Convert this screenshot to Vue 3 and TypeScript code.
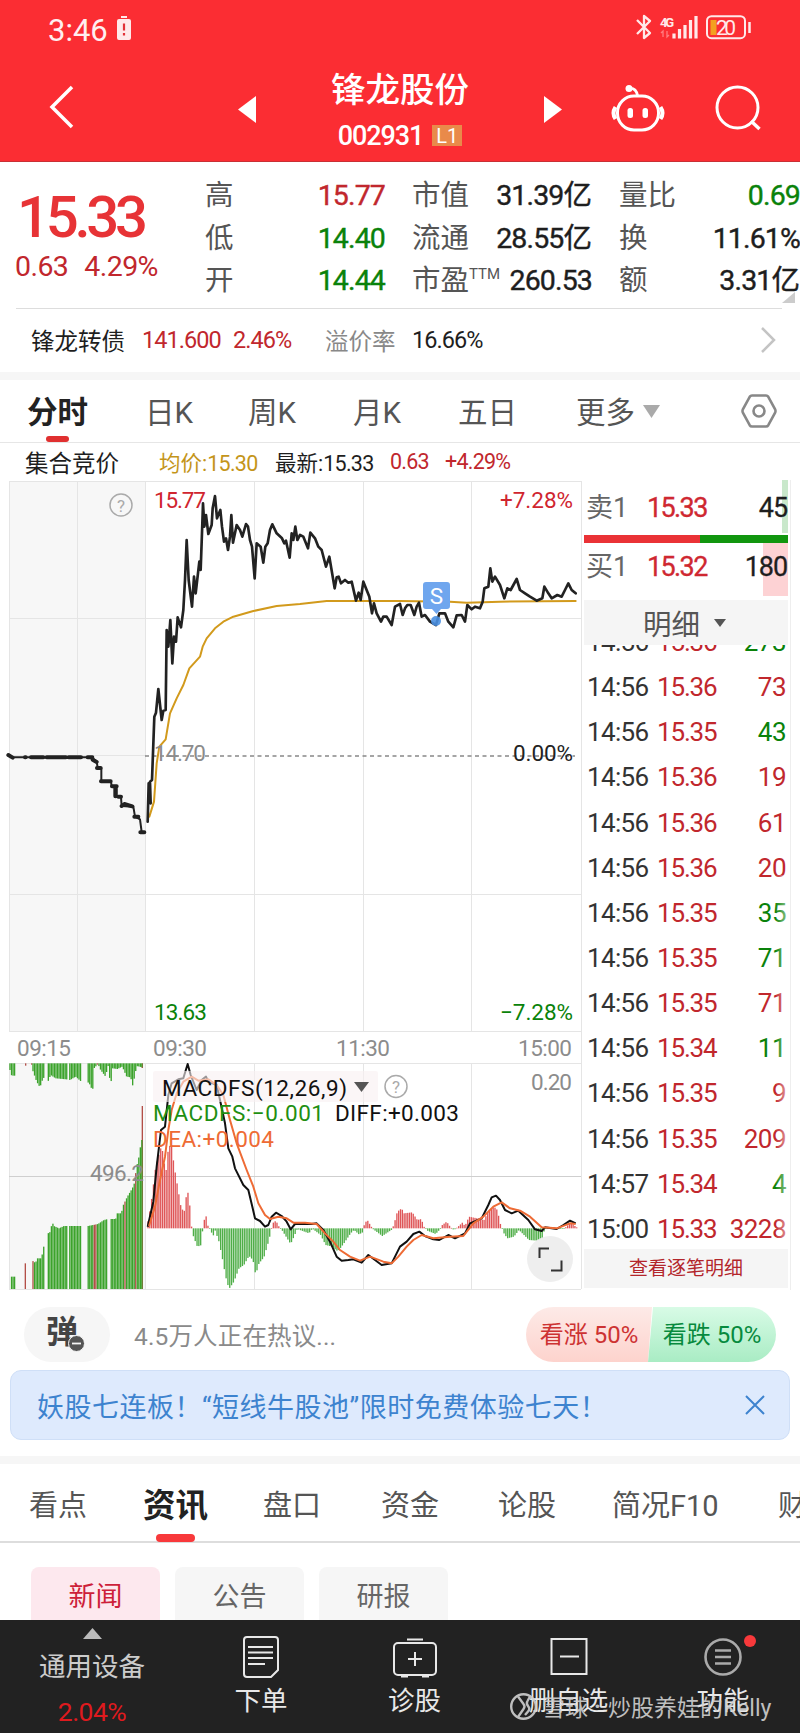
<script setup lang="ts">
type Point = [number, number]
interface Bar { x: number; y: number; h: number; up: boolean }
interface Label { t: string; x: number; y: number; w: number; c: string }

const stats = [
  ['高', '15.77', 'up', '市值', '', '31.39', '亿', '量比', '0.69', '', 'down'],
  ['低', '14.40', 'down', '流通', '', '28.55', '亿', '换', '11.61%', '', ''],
  ['开', '14.44', 'down', '市盈', 'TTM', '260.53', '', '额', '3.31', '亿', ''],
]

const trades: [string, string, string, string][] = [
  ['14:56', '15.36', '273', 'down'], ['14:56', '15.36', '73', 'up'], ['14:56', '15.35', '43', 'down'],
  ['14:56', '15.36', '19', 'up'], ['14:56', '15.36', '61', 'up'], ['14:56', '15.36', '20', 'up'],
  ['14:56', '15.35', '35', 'down'], ['14:56', '15.35', '71', 'down'], ['14:56', '15.35', '71', 'up'],
  ['14:56', '15.34', '11', 'down'], ['14:56', '15.35', '9', 'up'], ['14:56', '15.35', '209', 'up'],
  ['14:57', '15.34', '4', 'down'], ['15:00', '15.33', '3228', 'up'],
]

const RED = '#d0252f'
const GREEN = '#0a820a'
const GREY = '#8c8c8c'
const labels: Label[] = [
  { t: '15.77', x: 154, y: 508, w: 52, c: RED },
  { t: '+7.28%', x: 500, y: 508, w: 73, c: RED },
  { t: '14.70', x: 154, y: 761, w: 52, c: GREY },
  { t: '0.00%', x: 513, y: 761, w: 60, c: '#222' },
  { t: '13.63', x: 154, y: 1020, w: 53, c: GREEN },
  { t: '−7.28%', x: 500, y: 1020, w: 73, c: GREEN },
  { t: '09:15', x: 17, y: 1056, w: 54, c: GREY },
  { t: '09:30', x: 153, y: 1056, w: 54, c: GREY },
  { t: '11:30', x: 336, y: 1056, w: 54, c: GREY },
  { t: '15:00', x: 518, y: 1056, w: 54, c: GREY },
  { t: '0.20', x: 531, y: 1090, w: 41, c: GREY },
  { t: '496.2', x: 90, y: 1181, w: 54, c: GREY },
  { t: 'MACDFS(12,26,9)', x: 162, y: 1096, w: 185, c: '#111' },
  { t: 'MACDFS:−0.001', x: 153, y: 1121, w: 171, c: '#1f8f12' },
  { t: 'DIFF:+0.003', x: 335, y: 1121, w: 124, c: '#111' },
  { t: 'DEA:+0.004', x: 153, y: 1147, w: 121, c: '#ee6b35' },
]

const price = '443,1325 446,1210 452,1270 450,1205 456,1200 463,1010 468,998 475,927 485,1020 490,992 497,990 500,750 505,800 511,720 517,850 522,770 528,785 533,712 543,742 550,690 555,600 560,480 566,600 576,680 582,590 587,640 598,545 602,570 607,430 609,370 613,440 618,405 625,462 635,435 638,385 645,348 651,415 661,390 666,440 672,485 678,475 684,510 690,470 694,405 699,488 710,435 720,450 727,470 738,432 744,440 750,480 756,500 764,595 770,490 782,500 790,548 796,500 803,490 810,450 817,433 830,460 846,475 853,490 858,482 869,533 875,460 880,480 886,440 892,480 900,465 910,470 924,505 931,458 945,475 955,500 965,510 978,560 988,530 1004,625 1010,592 1016,590 1023,610 1035,600 1045,608 1055,605 1068,662 1076,638 1082,660 1090,605 1108,650 1116,700 1122,670 1130,700 1143,725 1150,710 1160,710 1175,735 1185,680 1200,672 1208,705 1215,685 1222,675 1232,675 1243,705 1250,680 1257,668 1265,710 1275,705 1290,725 1308,735 1318,700 1335,700 1345,725 1360,742 1370,706 1385,705 1395,725 1402,675 1415,688 1425,680 1440,685 1448,665 1453,625 1465,620 1471,565 1477,605 1485,590 1500,615 1513,655 1522,625 1532,630 1550,597 1560,630 1575,640 1590,650 1610,662 1627,655 1633,620 1645,640 1655,655 1672,645 1685,650 1695,630 1705,610 1715,630 1727,640'
const average = '448,1310 462,1265 470,1150 478,1100 497,1078 510,1000 530,955 550,915 568,865 600,830 608,800 620,775 645,745 670,725 700,710 760,693 830,678 900,672 980,663 1200,663 1350,665 1400,668 1500,665 1727,663'
const auction = '25,1125 38,1132 275,1132 290,1145 293,1163 304,1165 304,1204 333,1204 335,1220 350,1220 350,1248 363,1252 365,1278 400,1280 405,1310 420,1318 425,1356 432,1357'
const diff = '443,620 460,545 470,440 483,330 495,320 505,225 515,190 535,178 550,175 563,132 572,165 590,210 605,180 618,170 625,185 650,195 660,240 675,310 685,385 697,410 705,445 730,495 745,510 757,560 765,595 780,603 795,620 805,615 815,590 828,578 845,588 860,605 872,628 885,612 900,612 935,612 950,610 970,630 990,665 1010,710 1025,722 1045,720 1060,718 1085,728 1105,705 1125,720 1145,735 1175,730 1200,680 1220,665 1240,642 1258,635 1275,648 1300,658 1318,660 1345,645 1365,655 1395,640 1410,610 1445,595 1465,555 1475,532 1488,527 1500,540 1515,570 1535,580 1555,572 1585,600 1605,628 1625,633 1635,622 1670,627 1690,615 1710,602 1727,610'
const dea = '447,618 465,560 480,480 495,410 505,330 515,270 530,220 550,185 575,170 595,182 625,178 650,195 670,225 690,300 710,370 740,450 760,500 775,550 795,585 810,597 835,590 860,595 880,608 915,608 950,612 975,640 1000,665 1020,690 1050,710 1080,722 1110,710 1150,725 1175,730 1195,710 1220,680 1240,660 1265,645 1300,655 1350,650 1390,648 1420,610 1450,590 1480,560 1505,547 1530,565 1560,572 1590,590 1625,622 1670,625 1710,610 1727,612'

function parse(s: string): Point[] {
  return s.split(' ').map((p) => p.split(',').map(Number) as Point)
}
function at(pts: Point[], x: number): number {
  for (let i = 1; i < pts.length; i++) {
    const [x0, y0] = pts[i - 1]
    const [x1, y1] = pts[i]
    if (x <= x1) return y0 + ((y1 - y0) * Math.max(0, x - x0)) / (x1 - x0 || 1)
  }
  return pts[pts.length - 1][1]
}

const ZERO = 625
const histogram = parse('440,615 450,560 465,440 480,385 487,395 495,465 503,385 512,370 520,435 530,495 540,555 550,580 560,505 570,575 573,623 575,640 590,680 603,675 606,626 608,605 617,588 622,618 630,630 637,650 643,630 655,665 665,715 675,770 685,807 700,785 715,745 730,735 745,708 757,720 765,765 775,730 790,712 805,660 812,628 815,610 826,602 835,620 845,632 870,672 880,650 890,627 925,640 935,626 960,645 975,675 995,680 1008,692 1015,690 1030,670 1050,640 1060,630 1075,643 1085,638 1092,610 1100,600 1112,620 1118,628 1145,648 1175,628 1182,605 1190,575 1203,565 1210,580 1235,577 1250,600 1262,597 1270,620 1280,632 1305,642 1318,628 1325,615 1338,605 1350,622 1360,630 1370,622 1385,608 1393,618 1405,590 1430,595 1450,600 1465,570 1480,560 1490,570 1500,615 1510,640 1520,655 1540,650 1555,630 1570,645 1585,660 1610,662 1625,655 1632,627 1690,627 1700,617 1712,608 1727,622')
const macd: Bar[] = []
for (let x = 442; x < 1730; x += 5.45) {
  const y = at(histogram, x)
  macd.push({ x, y: Math.min(y, ZERO), h: Math.max(2, Math.abs(y - ZERO)), up: y < ZERO })
}

const gaps: Point[] = [[43, 94], [132, 140], [200, 206], [243, 262]]
const inGap = (x: number, list: Point[]) => list.some(([a, b]) => x > a && x < b)
const topEdge = parse('28,150 33,167 42,167 95,148 108,185 118,202 128,172 140,190 150,165 165,175 197,178 208,180 225,170 242,185 265,188 276,213 280,145 292,132 300,150 315,170 322,135 330,197 336,145 350,147 365,140 378,170 390,172 397,200 403,160 410,138 427,143')
const bottomEdge = parse('32,770 42,770 94,727 98,722 104,730 110,715 120,715 126,700 130,675 142,640 150,635 154,605 160,618 175,625 190,618 243,618 262,618 292,612 310,600 322,597 345,597 350,580 362,580 368,555 380,530 392,510 400,495 408,440 415,410 420,375 423,360')
const auctionBars: Bar[] = [
  { x: 75, y: 130, h: 7, up: true }, { x: 93, y: 130, h: 4, up: true }, { x: 425, y: 130, h: 14, up: true },
  { x: 74, y: 730, h: 77, up: true }, { x: 425, y: 258, h: 549, up: true },
]
for (let x = 28; x < 425; x += 4.6) {
  if (!inGap(x, gaps)) auctionBars.push({ x, y: 130, h: at(topEdge, x) - 130, up: x > 286 && x < 293 })
  if (x > 31 && !inGap(x, gaps) && !(x > 320 && x < 328)) {
    const y = at(bottomEdge, x)
    auctionBars.push({ x, y, h: 807 - y, up: (x > 277 && x < 286) || (x > 370 && x < 375) || (x < 97 && x > 92) || (x > 403 && x < 408) })
  }
}
const infoTabs = ['看点', '资讯', '盘口', '资金', '论股', '简况F10', '财务']
</script>

<template>
  <main class="app">
    <header class="top">
      <div class="status">
        <span class="clock">3:46</span>
        <svg class="low" width="14" height="25" viewBox="0 0 14 25"><path d="M4 0h6v2H4zM2 3h10q2 0 2 2v17q0 2-2 2H2q-2 0-2-2V5q0-2 2-2z" fill="#ffe9ea" /><path d="M7 7.500v7M7 17v2.500" stroke="#e23238" stroke-width="2.200" /></svg>
        <svg class="radios" width="116" height="26" viewBox="0 0 116 26">
          <g fill="none" stroke="#ffe9ea">
            <path d="M2 6l13 13-6 5V2l6 5L2 20" stroke-width="2.300" stroke-linejoin="round" />
            <path d="M39 24.500v-5M44.500 24.500V15M50 24.500V11M55.500 24.500V6M61 24.500V2" stroke-width="3.200" />
            <rect x="72" y="2.200" width="38" height="22" rx="4.500" stroke-width="2" />
            <path d="M114.500 8v11" stroke-width="2.500" />
          </g>
          <rect x="75.500" y="6" width="6" height="15" fill="#f3a01f" />
          <text x="25" y="12.500" textLength="14" class="g4">4G</text>
          <path d="M28 23v-6l-2 2M32 17v6l2-2" stroke="#ff7d80" fill="none" stroke-width="1.300" />
          <text x="81" y="20.500" textLength="20" class="bat">20</text>
        </svg>
      </div>
      <div class="nav">
        <svg width="26" height="44" viewBox="0 0 26 44"><path d="M24 2L4 22 24 42" fill="none" stroke="#fff" stroke-width="3.500" /></svg>
        <svg class="prev" width="18" height="27" viewBox="0 0 18 27"><path d="M18 0v27L0 13.500z" fill="#fff" /></svg>
        <div class="title"><h1>锋龙股份</h1><p><span class="num">002931</span><b>L1</b></p></div>
        <svg class="next" width="18" height="27" viewBox="0 0 18 27"><path d="M0 0v27l18-13.500z" fill="#fff" /></svg>
        <svg class="robot" width="54" height="50" viewBox="0 0 54 50">
          <g fill="none" stroke="#fff" stroke-width="3"><rect x="6.500" y="13" width="41" height="34" rx="16.500" /><path d="M18 5.500q7-1 8.500 7" stroke-width="2.800" /><path d="M4.500 24q-4 6 0 12M49.500 24q4 6 0 12" stroke-width="4" /></g>
          <circle cx="18" cy="5.500" r="3.500" fill="#fff" /><rect x="16.500" y="25" width="5.500" height="10" rx="2.500" fill="#fff" /><rect x="31.500" y="25" width="5.500" height="10" rx="2.500" fill="#fff" />
        </svg>
        <svg class="find" width="46" height="46" viewBox="0 0 46 46"><g fill="none" stroke="#fff" stroke-width="3"><circle cx="22.500" cy="22.500" r="20.500" /><path d="M36 36l8.500 8" stroke-width="3.500" /></g></svg>
      </div>
    </header>

    <section class="quote">
      <div class="last"><strong class="num">15.33</strong><p class="num"><span>0.63</span><span>4.29%</span></p></div>
      <div class="stats">
        <div v-for="s in stats" :key="s[0]" class="stat">
          <span>{{ s[0] }}</span><em class="num" :class="s[2]">{{ s[1] }}</em>
          <span class="l2">{{ s[3] }}<sup v-if="s[4]">{{ s[4] }}</sup></span><em class="num">{{ s[5] }}<u>{{ s[6] }}</u></em>
          <span class="l3">{{ s[7] }}</span><em class="num" :class="s[10]">{{ s[8] }}<u>{{ s[9] }}</u></em>
        </div>
      </div>
      <i class="corner"></i>
    </section>
    <section class="bond">
      <span>锋龙转债</span><span class="num up">141.600</span><span class="num up">2.46%</span><span class="muted">溢价率</span><span class="num">16.66%</span>
      <svg width="18" height="28" viewBox="0 0 18 28"><path d="M1 2l12 12L1 26" fill="none" stroke="#c4c4c4" stroke-width="2.500" /></svg>
    </section>
    <div class="band"></div>

    <nav class="periods">
      <span class="on">分时</span><span>日K</span><span>周K</span><span>月K</span><span>五日</span><span class="more">更多</span>
      <svg width="17" height="13" viewBox="0 0 17 13"><path d="M0 0h17L8.500 13z" fill="#aaa" /></svg>
      <svg width="36" height="34" viewBox="0 0 36 34"><g fill="none" stroke="#888" stroke-width="2.600"><path d="M11 1.500h14q1.500 0 2.300 1.300L34 15q1 2 0 4l-6.700 12.200q-.8 1.300-2.300 1.300H11q-1.500 0-2.300-1.300L2 19q-1-2 0-4L8.700 2.800Q9.500 1.500 11 1.500z" /><circle cx="18" cy="17" r="5.500" /></g></svg>
    </nav>
    <div class="legend">
      <span>集合竞价</span><span class="gold">均价:<i class="num">15.30</i></span><span>最新:<i class="num">15.33</i></span><span class="num up">0.63</span><span class="num up">+4.29%</span>
    </div>

    <section class="market">
      <svg class="chart" width="582" height="813" viewBox="0 480 582 813">
        <path d="M9 481h136v550H9zM9 1063h136v226H9z" fill="#f7f7f7" />
        <path d="M9 481.500H581M9 618.500H581M9 894.500H581M9 1031.500H581M9 1063.500H581M9 1289.500H581M9.500 481V1031M9.500 1063V1289M77.500 481V1031M77.500 1063V1289M145.500 481V1031M145.500 1063V1289M254.500 481V1031M254.500 1063V1289M363.500 481V1031M363.500 1063V1289M471.500 481V1031M471.500 1063V1289M581.500 481V1289" stroke="#e5e5e5" fill="none" />
        <path d="M9 755.500h136" stroke="#e5e5e5" /><path d="M9 1176.500h572" stroke="#cfcfcf" />
        <path d="M145 756h430" stroke="#888" stroke-width="1.300" stroke-dasharray="4 3.500" />
        <g transform="translate(0 380) scale(.333333)" fill="none" stroke-linejoin="round" stroke-linecap="round">
          <polyline :points="average" stroke="#d29a1c" stroke-width="6" />
          <polyline :points="auction" stroke="#222" stroke-width="6" />
          <path d="M25 1125l13 8M75 1132h2M93 1132h37M140 1132h58M206 1132h37M263 1132h14M278 1139l12 7M291 1164h11M303 1204h29M336 1219h14M346 1225v24M355 1250h8M365 1278l8-6 24 7M403 1310h12M421 1357h12" stroke="#222" stroke-width="12" />
          <polyline :points="price" stroke="#222" stroke-width="8" />
        </g>
        <path d="M426 582h21q3 0 3 3v21q0 3-3 3h-6l-4.500 5-4.500-5h-6q-3 0-3-3v-21q0-3 3-3z" fill="#6fa6ee" />
        <circle cx="436" cy="621" r="5" fill="#4a90e2" opacity=".9" />
        <text x="436.500" y="604" text-anchor="middle" fill="#fff">S</text>
        <g transform="translate(0 1020) scale(.333333)">
          <rect v-for="(b, i) in auctionBars" :key="'a' + i" :x="b.x" :y="b.y" width="4" :height="b.h" :fill="b.up ? '#b34f48' : '#3ba32b'" />
          <rect v-for="(b, i) in macd" :key="i" :x="b.x" :y="b.y" width="4" :height="b.h" :fill="b.up ? '#df5658' : '#4fae48'" />
          <g fill="none" stroke-linejoin="round" stroke-width="6"><polyline :points="diff" stroke="#111" /><polyline :points="dea" stroke="#ee6b35" /></g>
        </g>
        <rect x="153" y="1071" width="225" height="31" rx="2" fill="#f8f0f2" fill-opacity=".6" />
        <text v-for="l in labels" :key="l.t" :x="l.x" :y="l.y" :textLength="l.w" :fill="l.c">{{ l.t }}</text>
        <path d="M354 1082h15l-7.500 10z" fill="#555" />
        <g fill="none" stroke="#aaa" stroke-width="1.500"><circle cx="121" cy="505" r="11" /><circle cx="396" cy="1086.500" r="11" /></g>
        <g class="q"><text x="121" y="511.500">?</text><text x="396" y="1093">?</text></g>
        <circle cx="550" cy="1259" r="23" fill="#ededed" fill-opacity=".93" />
        <path d="M539.500 1258v-9.500H549M561.500 1260.500v10H551" fill="none" stroke="#333" stroke-width="2" />
      </svg>

      <aside class="book">
        <div class="level sell"><span>卖1</span><b class="num">15.33</b><em class="num">45</em></div>
        <div class="ratio"><i></i></div>
        <div class="level buy"><span>买1</span><b class="num">15.32</b><em class="num">180</em></div>
        <div class="detail">明细<svg width="12" height="8" viewBox="0 0 12 8"><path d="M0 0h12L6 8z" fill="#555" /></svg></div>
        <div class="trades">
          <div v-for="(t, i) in trades" :key="i" class="trade num"><span>{{ t[0] }}</span><b>{{ t[1] }}</b><em :class="t[3]">{{ t[2] }}</em></div>
        </div>
        <div class="all">查看逐笔明细</div>
      </aside>
    </section>

    <section class="talk">
      <div class="danmu">弹<svg width="17" height="17" viewBox="0 0 17 17"><circle cx="8.500" cy="8.500" r="8" fill="#555" stroke="#f6f6f6" /><path d="M4 8.500h9" stroke="#f6f6f6" stroke-width="1.800" /></svg></div>
      <span class="hint">4.5万人正在热议...</span>
      <div class="vote"><span class="bull">看涨 50%</span><span class="bear">看跌 50%</span></div>
    </section>
    <section class="promo"><span>妖股七连板！“短线牛股池”限时免费体验七天！</span><svg width="20" height="20" viewBox="0 0 20 20"><path d="M1 1l18 18M19 1L1 19" stroke="#3d83cf" stroke-width="2" /></svg></section>
    <div class="band b2"></div>
    <nav class="info"><span v-for="(t, i) in infoTabs" :key="t" :class="{ on: i === 1 }">{{ t }}</span></nav>
    <div class="chips"><span class="on">新闻</span><span>公告</span><span>研报</span></div>

    <footer class="dock">
      <div class="device"><svg width="19" height="11" viewBox="0 0 19 11"><path d="M9.500 0L19 11H0z" fill="#bbb" /></svg><span>通用设备</span><b class="num">2.04%</b></div>
      <div class="tool"><svg width="44" height="42" viewBox="0 0 44 42"><g fill="none" stroke="#e8e8e8" stroke-width="2"><path d="M8 1h28q3 0 3 3v30l-7 7H8q-3 0-3-3V4q0-3 3-3z" /><path d="M9 11h25M9 16.500h25M9 22h25M9 28h17" /></g></svg><span>下单</span></div>
      <div class="tool"><svg width="44" height="42" viewBox="0 0 44 42"><g fill="none" stroke="#e8e8e8" stroke-width="2"><rect x="1" y="7" width="42" height="32" rx="4" /><path d="M14 3.500h16M8 40.500h7M29 40.500h7M22 16v14M15 23h14" /></g></svg><span>诊股</span></div>
      <div class="tool"><svg width="44" height="42" viewBox="0 0 44 42"><g fill="none" stroke="#e8e8e8" stroke-width="2"><path d="M4.500 3h35v35h-35zM13 20.500h19" /></g></svg><span>删自选</span></div>
      <div class="tool"><svg width="44" height="42" viewBox="0 0 44 42"><g fill="none" stroke="#aaa" stroke-width="2.600"><circle cx="22" cy="21" r="17.500" /><path d="M14 14.500h16M14 21h16M14 27.500h16" /></g></svg><span>功能</span><i class="dot"></i></div>
      <div class="watermark">
        <svg width="27" height="29" viewBox="0 0 27 29"><g fill="none" stroke="#d0d0d0" stroke-width="2.400"><circle cx="13.500" cy="14.500" r="12.300" /><path d="M8 4.500l5.500 7.500q2 2.500 0 5L8 25M20 4.500L17.500 9q-1.500 2.500.5 5l1 1.500q1 2-1 4L15 23" /></g></svg>
        <span>雪球</span><span class="sep">·</span><span>炒股养娃的Kelly</span>
      </div>
    </footer>
  </main>
</template>

<style>
body { margin: 0; background: #fff; }
</style>
<style scoped>
.app { width: 800px; height: 1733px; overflow: hidden; background: #fff; color: #1e1e1e; font-family: Roboto, "Noto Sans CJK SC", sans-serif; white-space: nowrap; }
svg { display: block; flex: none; }
em, i { font-style: normal; }
u { text-decoration: none; letter-spacing: 0; }
h1, p { margin: 0; }
.num { letter-spacing: -0.04em; }
.up { color: #c1272d !important; }
.down { color: #0a820a !important; }

.top { height: 162px; box-sizing: border-box; background: #fb2d33; border-bottom: 1px solid #c93035; color: #fff; }
.status { height: 57px; display: flex; align-items: flex-start; }
.clock { margin: 13px 0 0 48px; width: 69px; font-size: 31px; line-height: 35px; color: #ffeff0; }
.low { margin-top: 16px; }
.radios { margin: 14px 0 0 504px; }
.g4 { font: 700 13px Roboto, sans-serif; fill: #ffe9ea; }
.bat { font: 21px Roboto, sans-serif; fill: #ffe9ea; }
.nav { height: 104px; display: flex; align-items: flex-start; padding-left: 48px; }
.nav > svg { margin-top: 28px; }
.nav > .prev { margin: 39px 0 0 164px; }
.title { width: 288px; text-align: center; }
.title h1 { font-size: 34.500px; line-height: 42px; font-weight: 500; margin-top: 12px; }
.title p { display: flex; align-items: center; justify-content: center; gap: 9px; height: 21px; margin-top: 14px; line-height: 24px; font-size: 27px; font-weight: 500; }
.title b { width: 30px; height: 21px; background: #e98a4a; font-size: 20px; font-weight: 400; line-height: 22px; }
.nav > .next { margin-top: 39px; }
.nav > .robot { margin: 26px 0 0 49px; }
.nav > .find { margin: 28px 0 0 50px; }

.quote { height: 147px; position: relative; display: flex; }
.quote::after { content: ""; position: absolute; left: 16px; right: 18px; bottom: 0; border-bottom: 1px solid #ddd; }
.last { width: 205px; color: #e73336; }
.last strong { display: block; font-size: 58px; font-weight: 500; line-height: 60px; margin: 25px 0 0 17px; letter-spacing: -0.073em; }
.last p { display: flex; gap: 16px; margin: 4px 0 0 15px; font-size: 28.500px; line-height: 32px; color: #c1272d; letter-spacing: -0.02em; }
.stats { padding-top: 13px; }
.stat { display: grid; grid-template-columns: 60px 120px 81px 126px 82px 126px; height: 42.500px; line-height: 42.500px; font-size: 28.500px; color: #555; }
.stat em { text-align: right; color: #1e1e1e; font-weight: 400; letter-spacing: -0.03em; -webkit-text-stroke: .4px currentColor; }
.stat .l2, .stat .l3 { padding-left: 27px; }
.stat sup { font-size: 15px; line-height: 0; vertical-align: 11px; }
.corner { position: absolute; left: 782px; top: 130px; border-left: 13px solid transparent; border-bottom: 11px solid #ccc; }
.bond { height: 63px; box-sizing: border-box; padding-bottom: 2px; display: grid; grid-template-columns: 111px 91px 92px 87px 349px 18px; padding-left: 31px; align-items: center; font-size: 23.500px; }
.bond .muted { color: #888; }
.band { height: 8px; background: #f6f6f6; }

.periods { height: 63px; box-sizing: border-box; border-bottom: 1px solid #e6e6e6; display: grid; grid-template-columns: 118px 103px 105px 105px 118px 67px 98px 36px; padding-left: 27px; align-items: center; font-size: 29.500px; color: #555; line-height: 66px; }
.periods span { height: 62px; }
.periods .on { position: relative; font-weight: 700; font-size: 30.500px; color: #222; }
.periods .on::after { content: ""; position: absolute; left: 19px; bottom: 0; width: 23px; height: 6px; border-radius: 3px; background: #e03030; }
.legend { height: 37px; display: grid; grid-template-columns: 134px 116px 115px 55px 90px; padding-left: 25px; align-items: center; font-size: 23.500px; letter-spacing: 0; }
.legend .num, .legend i { font-size: 21.500px; letter-spacing: -0.035em; }
.legend .gold { color: #c4951a; font-size: 21.500px; }
.legend span:nth-child(3) { font-size: 21.500px; }

.market { display: flex; height: 813px; }
.chart text { font-family: Roboto, sans-serif; font-size: 22.500px; }
.chart .q text { font-size: 17px; fill: #aaa; text-anchor: middle; }
.book { width: 204px; padding: 0 2px; border-right: 1px solid #eee; height: 810px; }
.level { display: grid; grid-template-columns: 61px 63px 1fr; height: 55px; line-height: 56px; padding: 0 1px 0 2px; font-size: 27px; box-sizing: border-box; color: #666; }
.level b { font-weight: 400; color: #cf2831; letter-spacing: -0.06em; -webkit-text-stroke: .3px currentColor; }
.level em { text-align: right; color: #1e1e1e; -webkit-text-stroke: .3px currentColor; }
.sell { background: linear-gradient(#c9e8cb, #c9e8cb) 198px 0 / 6px 53px no-repeat; }
.buy { height: 53px; line-height: 48px; background: linear-gradient(#fdd2d4, #fdd2d4) 179px 0 / 25px 53px no-repeat; }
.ratio { height: 8px; background: #11960f; }
.ratio i { display: block; width: 57%; height: 100%; background: #ea3236; }
.detail { height: 45px; margin-top: 4px; background: #f5f5f5; display: flex; align-items: center; gap: 14px; padding-left: 59px; font-size: 28.500px; color: #555; }
.trades { height: 604px; overflow: hidden; position: relative; display: flex; flex-direction: column; }
.trades::after { content: ""; position: absolute; top: 230px; right: 0; bottom: 0; width: 12px; background: linear-gradient(90deg, rgba(255,255,255,.05), rgba(255,255,255,.55)); }
.trade { flex: none; display: grid; grid-template-columns: 70px 61px 1fr; height: 45.150px; line-height: 45.150px; padding: 0 2px 0 3px; font-size: 26px; letter-spacing: -0.025em; }
.trade:first-child { margin-top: -25px; }
.trade b { font-weight: 400; color: #c1272d; letter-spacing: -0.045em; }
.trade em { text-align: right; letter-spacing: -0.02em; }
.trade span { color: #333; }
.all { height: 39px; background: #f5f5f5; color: #b3262b; text-align: center; font-size: 19px; line-height: 40px; }

.talk { height: 55px; margin-top: 14px; display: flex; align-items: center; padding-left: 24px; }
.danmu { width: 86px; height: 55px; border-radius: 28px; background: #f6f6f6; position: relative; text-align: center; font-size: 32px; font-weight: 700; line-height: 51px; color: #444; text-indent: -10px; }
.danmu svg { position: absolute; left: 44px; top: 28px; }
.hint { margin-left: 24px; width: 392px; font-size: 24.500px; color: #8a8a8a; letter-spacing: .15px; }
.vote { width: 250px; height: 55px; display: flex; border-radius: 28px; overflow: hidden; font-size: 24px; line-height: 57px; text-align: center; }
.bull { width: 128px; color: #cd3232; background: linear-gradient(#fdeae7, #fdd3cd); clip-path: polygon(0 0, 100% 0, 122px 100%, 0 100%); }
.bear { width: 130px; margin-left: -4px; color: #078a3e; background: linear-gradient(#d8fbe6, #a9ecc4); clip-path: polygon(5px 0, 100% 0, 100% 100%, 0 100%); }
.promo { height: 70px; box-sizing: border-box; margin: 8px 10px 0; border: 1px solid #cfdff7; border-radius: 11px; background: #deeafd; display: flex; justify-content: space-between; align-items: center; padding: 0 24px 0 26px; font-size: 27px; letter-spacing: .5px; color: #3d83cf; }
.b2 { margin-top: 16px; }
.info { height: 79px; box-sizing: border-box; border-bottom: 2px solid #ddd; display: grid; grid-template-columns: 114px 120px 118px 117px 114px 166px 60px; padding-left: 29px; line-height: 85px; font-size: 29px; color: #555; }
.info .on { font-size: 32.500px; font-weight: 700; color: #222; position: relative; }
.info .on::after { content: ""; position: absolute; left: 13px; top: 70px; width: 39px; height: 8px; border-radius: 4px; background: #f8393b; }
.chips { height: 53px; margin-top: 24px; display: flex; gap: 15px; padding-left: 31px; overflow: hidden; }
.chips span { width: 129px; height: 70px; border-radius: 8px; background: #f6f6f6; text-align: center; font-size: 27px; line-height: 60px; color: #666; }
.chips .on { background: #fde8ee; color: #cd1f3a; }

.dock { position: relative; height: 113px; background: #222; display: grid; grid-template-columns: 184px 154px 153px 155px 154px; color: #e8e8e8; font-size: 26.500px; }
.device { display: flex; flex-direction: column; align-items: center; padding-top: 8px; color: #ccc; }
.device span { margin-top: 10px; line-height: 36px; }
.device b { margin-top: 11px; line-height: 32px; color: #df1a1e; font-weight: 400; letter-spacing: -.02em; }
.tool { position: relative; display: flex; flex-direction: column; align-items: center; padding-top: 16px; }
.tool span { margin-top: 5px; line-height: 36px; }
.dot { position: absolute; left: 98px; top: 15px; width: 12px; height: 12px; border-radius: 50%; background: #f8393b; }
.watermark { position: absolute; left: 510px; top: 73px; display: flex; align-items: center; height: 26px; font-size: 23px; color: #d0d0d0; opacity: .9; }
.watermark span { margin-left: 5px; }
.watermark .sep { margin: 0 2px 0 6px; font-weight: 700; }
</style>
